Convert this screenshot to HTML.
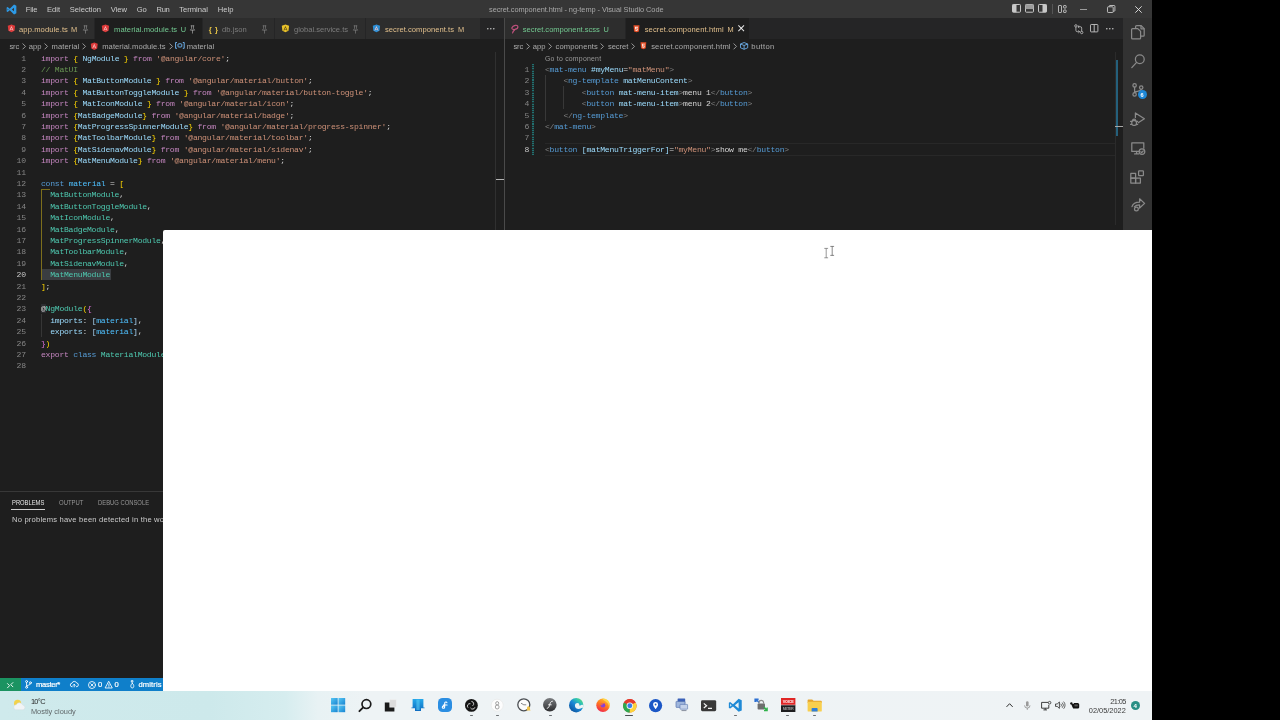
<!DOCTYPE html>
<html lang="en"><head><meta charset="utf-8"><title>secret.component.html - ng-temp - Visual Studio Code</title>
<style>
html,body{margin:0;padding:0;background:#000;}
#root{will-change:transform;position:relative;width:1280px;height:720px;overflow:hidden;background:#000;font-family:'Liberation Sans', sans-serif;}
.cl{position:absolute;white-space:pre;letter-spacing:-0.2558px;font-family:'Liberation Mono', monospace;font-size:8.1px;line-height:11.4px;height:11.4px;color:#d4d4d4;}
.ln{position:absolute;white-space:pre;letter-spacing:-0.2558px;font-family:'Liberation Mono', monospace;font-size:8.1px;line-height:11.4px;height:11.4px;color:#858585;text-align:right;}
.k{color:#c586c0}.b{color:#569cd6}.v{color:#9cdcfe}.s{color:#ce9178}.c{color:#6a9955}.t{color:#4ec9b0}
.y{color:#ffd700}.p{color:#da70d6}.u{color:#179fff}.g{color:#808080}.n{color:#4fc1ff}.w{color:#a9d4f2}
svg{position:absolute;overflow:visible}
</style></head><body><div id="root">
<div style="position:absolute;left:0px;top:0px;width:1152px;height:720px;background:#1e1e1e;"></div><div style="position:absolute;left:0px;top:0px;width:1152px;height:18px;background:#363636;"></div><div style="position:absolute;left:0px;top:18px;width:1123px;height:20.8px;background:#252526;"></div><div style="position:absolute;left:1123px;top:18px;width:29px;height:673.2px;background:#323232;"></div><div style="position:absolute;left:0px;top:18px;width:94.4px;height:20.8px;background:#2d2d2d;"></div><div style="position:absolute;left:94.4px;top:18px;width:108.3px;height:20.8px;background:#1e1e1e;"></div><div style="position:absolute;left:202.7px;top:18px;width:71.1px;height:20.8px;background:#2d2d2d;"></div><div style="position:absolute;left:273.8px;top:18px;width:91.2px;height:20.8px;background:#2d2d2d;"></div><div style="position:absolute;left:365px;top:18px;width:115.5px;height:20.8px;background:#2d2d2d;"></div><div style="position:absolute;left:94.10000000000001px;top:18px;width:0.6px;height:20.8px;background:#252526;"></div><div style="position:absolute;left:202.39999999999998px;top:18px;width:0.6px;height:20.8px;background:#252526;"></div><div style="position:absolute;left:273.5px;top:18px;width:0.6px;height:20.8px;background:#252526;"></div><div style="position:absolute;left:364.7px;top:18px;width:0.6px;height:20.8px;background:#252526;"></div><div style="position:absolute;left:480.2px;top:18px;width:0.6px;height:20.8px;background:#252526;"></div><div style="position:absolute;left:504.5px;top:18px;width:120.7px;height:20.8px;background:#2d2d2d;"></div><div style="position:absolute;left:625.2px;top:18px;width:123.8px;height:20.8px;background:#1e1e1e;"></div><div style="position:absolute;left:624.9px;top:18px;width:0.6px;height:20.8px;background:#252526;"></div><div style="position:absolute;left:504.1px;top:18px;width:0.7px;height:212px;background:#4a4a4a;"></div><div style="position:absolute;left:41px;top:269.3px;width:69.675px;height:10.4px;background:#3a3d41;"></div><div style="position:absolute;left:41px;top:304.2px;width:4.605px;height:9.0px;background:#2c2d30;"></div><div style="position:absolute;left:40.7px;top:189.0px;width:0.7px;height:91.2px;background:#7d6e1c;"></div><div style="position:absolute;left:40.7px;top:189.0px;width:9.21px;height:0.7px;background:#7d6e1c;"></div><div style="position:absolute;left:40.7px;top:314.4px;width:0.6px;height:22.8px;background:#363636;"></div><div class="ln" style="left:0;width:25.8px;top:52.60px;color:#858585">1</div><div class="cl" style="left:41px;top:52.60px"><span class="k">import</span> <span class="y">{</span> <span class="v">NgModule</span> <span class="y">}</span> <span class="k">from</span> <span class="s">&#x27;@angular/core&#x27;</span>;</div><div class="ln" style="left:0;width:25.8px;top:64.00px;color:#858585">2</div><div class="cl" style="left:41px;top:64.00px"><span class="c">// MatUI</span></div><div class="ln" style="left:0;width:25.8px;top:75.40px;color:#858585">3</div><div class="cl" style="left:41px;top:75.40px"><span class="k">import</span> <span class="y">{</span> <span class="v">MatButtonModule</span> <span class="y">}</span> <span class="k">from</span> <span class="s">&#x27;@angular/material/button&#x27;</span>;</div><div class="ln" style="left:0;width:25.8px;top:86.80px;color:#858585">4</div><div class="cl" style="left:41px;top:86.80px"><span class="k">import</span> <span class="y">{</span> <span class="v">MatButtonToggleModule</span> <span class="y">}</span> <span class="k">from</span> <span class="s">&#x27;@angular/material/button-toggle&#x27;</span>;</div><div class="ln" style="left:0;width:25.8px;top:98.20px;color:#858585">5</div><div class="cl" style="left:41px;top:98.20px"><span class="k">import</span> <span class="y">{</span> <span class="v">MatIconModule</span> <span class="y">}</span> <span class="k">from</span> <span class="s">&#x27;@angular/material/icon&#x27;</span>;</div><div class="ln" style="left:0;width:25.8px;top:109.60px;color:#858585">6</div><div class="cl" style="left:41px;top:109.60px"><span class="k">import</span> <span class="y">{</span><span class="v">MatBadgeModule</span><span class="y">}</span> <span class="k">from</span> <span class="s">&#x27;@angular/material/badge&#x27;</span>;</div><div class="ln" style="left:0;width:25.8px;top:121.00px;color:#858585">7</div><div class="cl" style="left:41px;top:121.00px"><span class="k">import</span> <span class="y">{</span><span class="v">MatProgressSpinnerModule</span><span class="y">}</span> <span class="k">from</span> <span class="s">&#x27;@angular/material/progress-spinner&#x27;</span>;</div><div class="ln" style="left:0;width:25.8px;top:132.40px;color:#858585">8</div><div class="cl" style="left:41px;top:132.40px"><span class="k">import</span> <span class="y">{</span><span class="v">MatToolbarModule</span><span class="y">}</span> <span class="k">from</span> <span class="s">&#x27;@angular/material/toolbar&#x27;</span>;</div><div class="ln" style="left:0;width:25.8px;top:143.80px;color:#858585">9</div><div class="cl" style="left:41px;top:143.80px"><span class="k">import</span> <span class="y">{</span><span class="v">MatSidenavModule</span><span class="y">}</span> <span class="k">from</span> <span class="s">&#x27;@angular/material/sidenav&#x27;</span>;</div><div class="ln" style="left:0;width:25.8px;top:155.20px;color:#858585">10</div><div class="cl" style="left:41px;top:155.20px"><span class="k">import</span> <span class="y">{</span><span class="v">MatMenuModule</span><span class="y">}</span> <span class="k">from</span> <span class="s">&#x27;@angular/material/menu&#x27;</span>;</div><div class="ln" style="left:0;width:25.8px;top:166.60px;color:#858585">11</div><div class="ln" style="left:0;width:25.8px;top:178.00px;color:#858585">12</div><div class="cl" style="left:41px;top:178.00px"><span class="b">const</span> <span class="n">material</span> = <span class="y">[</span></div><div class="ln" style="left:0;width:25.8px;top:189.40px;color:#858585">13</div><div class="cl" style="left:41px;top:189.40px">  <span class="t">MatButtonModule</span>,</div><div class="ln" style="left:0;width:25.8px;top:200.80px;color:#858585">14</div><div class="cl" style="left:41px;top:200.80px">  <span class="t">MatButtonToggleModule</span>,</div><div class="ln" style="left:0;width:25.8px;top:212.20px;color:#858585">15</div><div class="cl" style="left:41px;top:212.20px">  <span class="t">MatIconModule</span>,</div><div class="ln" style="left:0;width:25.8px;top:223.60px;color:#858585">16</div><div class="cl" style="left:41px;top:223.60px">  <span class="t">MatBadgeModule</span>,</div><div class="ln" style="left:0;width:25.8px;top:235.00px;color:#858585">17</div><div class="cl" style="left:41px;top:235.00px">  <span class="t">MatProgressSpinnerModule</span>,</div><div class="ln" style="left:0;width:25.8px;top:246.40px;color:#858585">18</div><div class="cl" style="left:41px;top:246.40px">  <span class="t">MatToolbarModule</span>,</div><div class="ln" style="left:0;width:25.8px;top:257.80px;color:#858585">19</div><div class="cl" style="left:41px;top:257.80px">  <span class="t">MatSidenavModule</span>,</div><div class="ln" style="left:0;width:25.8px;top:269.20px;color:#c6c6c6">20</div><div class="cl" style="left:41px;top:269.20px">  <span class="t">MatMenuModule</span></div><div class="ln" style="left:0;width:25.8px;top:280.60px;color:#858585">21</div><div class="cl" style="left:41px;top:280.60px"><span class="y">]</span>;</div><div class="ln" style="left:0;width:25.8px;top:292.00px;color:#858585">22</div><div class="ln" style="left:0;width:25.8px;top:303.40px;color:#858585">23</div><div class="cl" style="left:41px;top:303.40px">@<span class="t">NgModule</span><span class="y">(</span><span class="p">{</span></div><div class="ln" style="left:0;width:25.8px;top:314.80px;color:#858585">24</div><div class="cl" style="left:41px;top:314.80px">  <span class="v">imports</span>: <span class="w">[</span><span class="n">material</span><span class="w">]</span>,</div><div class="ln" style="left:0;width:25.8px;top:326.20px;color:#858585">25</div><div class="cl" style="left:41px;top:326.20px">  <span class="v">exports</span>: <span class="w">[</span><span class="n">material</span><span class="w">]</span>,</div><div class="ln" style="left:0;width:25.8px;top:337.60px;color:#858585">26</div><div class="cl" style="left:41px;top:337.60px"><span class="p">}</span><span class="y">)</span></div><div class="ln" style="left:0;width:25.8px;top:349.00px;color:#858585">27</div><div class="cl" style="left:41px;top:349.00px"><span class="k">export</span> <span class="b">class</span> <span class="t">MaterialModule</span> <span class="y">{}</span></div><div class="ln" style="left:0;width:25.8px;top:360.40px;color:#858585">28</div><div style="position:absolute;left:545px;top:143.4px;width:570px;height:0.7px;background:#282828;"></div><div style="position:absolute;left:545px;top:154.60000000000002px;width:570px;height:0.7px;background:#282828;"></div><div style="position:absolute;left:544.7px;top:75.0px;width:0.6px;height:45.6px;background:#383838;"></div><div style="position:absolute;left:563.12px;top:86.4px;width:0.6px;height:22.8px;background:#383838;"></div><div style="position:absolute;left:532.4px;top:63.6px;width:1.8px;height:91.2px;background:repeating-linear-gradient(180deg,#217070 0 1.1px,#1f3434 1.1px 2.2px)"></div><div class="ln" style="left:505px;width:24px;top:64.00px;color:#858585">1</div><div class="cl" style="left:545px;top:64.00px"><span class="g">&lt;</span><span class="b">mat-menu</span> <span class="v">#myMenu</span>=<span class="s">&quot;matMenu&quot;</span><span class="g">&gt;</span></div><div class="ln" style="left:505px;width:24px;top:75.40px;color:#858585">2</div><div class="cl" style="left:545px;top:75.40px">    <span class="g">&lt;</span><span class="b">ng-template</span> <span class="v">matMenuContent</span><span class="g">&gt;</span></div><div class="ln" style="left:505px;width:24px;top:86.80px;color:#858585">3</div><div class="cl" style="left:545px;top:86.80px">        <span class="g">&lt;</span><span class="b">button</span> <span class="v">mat-menu-item</span><span class="g">&gt;</span>menu 1<span class="g">&lt;/</span><span class="b">button</span><span class="g">&gt;</span></div><div class="ln" style="left:505px;width:24px;top:98.20px;color:#858585">4</div><div class="cl" style="left:545px;top:98.20px">        <span class="g">&lt;</span><span class="b">button</span> <span class="v">mat-menu-item</span><span class="g">&gt;</span>menu 2<span class="g">&lt;/</span><span class="b">button</span><span class="g">&gt;</span></div><div class="ln" style="left:505px;width:24px;top:109.60px;color:#858585">5</div><div class="cl" style="left:545px;top:109.60px">    <span class="g">&lt;/</span><span class="b">ng-template</span><span class="g">&gt;</span></div><div class="ln" style="left:505px;width:24px;top:121.00px;color:#858585">6</div><div class="cl" style="left:545px;top:121.00px"><span class="g">&lt;/</span><span class="b">mat-menu</span><span class="g">&gt;</span></div><div class="ln" style="left:505px;width:24px;top:132.40px;color:#858585">7</div><div class="ln" style="left:505px;width:24px;top:143.80px;color:#c6c6c6">8</div><div class="cl" style="left:545px;top:143.80px"><span class="g">&lt;</span><span class="b">button</span> <span class="v">[matMenuTriggerFor]</span>=<span class="s">&quot;myMenu&quot;</span><span class="g">&gt;</span>show me<span class="g">&lt;/</span><span class="b">button</span><span class="g">&gt;</span></div><div style="position:absolute;left:1115.2px;top:59.5px;width:3.2px;height:76px;background:#24607c;"></div><div style="position:absolute;left:1114.9px;top:52.2px;width:0.5px;height:173px;background:#2b2b2b;"></div><div style="position:absolute;left:495.3px;top:52.2px;width:0.5px;height:177.8px;background:#303030;"></div><div style="position:absolute;left:1115px;top:126.4px;width:8px;height:0.9px;background:#a8a8a8;"></div><div style="position:absolute;left:495.8px;top:178.9px;width:8.3px;height:0.9px;background:#b4b4b4;"></div><div style="position:absolute;left:0px;top:490.7px;width:1123px;height:0.7px;background:#383838;"></div><div style="position:absolute;left:0px;top:678px;width:1152px;height:13.2px;background:#0f7fca;"></div><div style="position:absolute;left:0px;top:678px;width:20.5px;height:13.2px;background:#1b9361;"></div><div style="position:absolute;left:0;top:691.2px;width:1152px;height:28.8px;background:linear-gradient(90deg,#cfeaec 0,#cde9eb 210px,#d6edef 285px,#e8f2f4 318px,#eef3f5 370px,#eff3f5 100%)"></div><div style="position:absolute;left:162.5px;top:230px;width:989.5px;height:461.2px;background:#ffffff;border-top-left-radius:2px;z-index:5;"></div><svg style="left:5.5px;top:3.6px" width="11" height="11" viewBox="0 0 24 24" ><path d="M17.5 1.2 22.6 3.6v16.8l-5.1 2.4L8.2 13.9 3.6 17.4 1.4 16.3V7.7l2.2-1.1 4.6 3.5z" fill="#2d9ae6"/><path d="M17.5 8.2 12.6 12l4.9 3.8z" fill="#363636"/><path d="M3.6 10.2 5.5 12 3.6 13.8z" fill="#363636"/></svg><span style="position:absolute;top:3.90px;line-height:12px;white-space:pre;color:#cccccc;font-size:7.6px;font-family:'Liberation Sans', sans-serif;left:25.70px;letter-spacing:-0.187px;">File</span><span style="position:absolute;top:3.90px;line-height:12px;white-space:pre;color:#cccccc;font-size:7.6px;font-family:'Liberation Sans', sans-serif;left:47.00px;letter-spacing:0.027px;">Edit</span><span style="position:absolute;top:3.90px;line-height:12px;white-space:pre;color:#cccccc;font-size:7.6px;font-family:'Liberation Sans', sans-serif;left:69.70px;letter-spacing:0.006px;">Selection</span><span style="position:absolute;top:3.90px;line-height:12px;white-space:pre;color:#cccccc;font-size:7.6px;font-family:'Liberation Sans', sans-serif;left:110.70px;letter-spacing:-0.007px;">View</span><span style="position:absolute;top:3.90px;line-height:12px;white-space:pre;color:#cccccc;font-size:7.6px;font-family:'Liberation Sans', sans-serif;left:136.70px;letter-spacing:-0.020px;">Go</span><span style="position:absolute;top:3.90px;line-height:12px;white-space:pre;color:#cccccc;font-size:7.6px;font-family:'Liberation Sans', sans-serif;left:156.40px;letter-spacing:-0.246px;">Run</span><span style="position:absolute;top:3.90px;line-height:12px;white-space:pre;color:#cccccc;font-size:7.6px;font-family:'Liberation Sans', sans-serif;left:179.20px;letter-spacing:0.012px;">Terminal</span><span style="position:absolute;top:3.90px;line-height:12px;white-space:pre;color:#cccccc;font-size:7.6px;font-family:'Liberation Sans', sans-serif;left:217.70px;letter-spacing:0.094px;">Help</span><span style="position:absolute;top:3.90px;line-height:12px;white-space:pre;color:#a8a8a8;font-size:7.4px;font-family:'Liberation Sans', sans-serif;left:489.00px;letter-spacing:-0.062px;">secret.component.html - ng-temp - Visual Studio Code</span><svg style="left:1012px;top:4.4px" width="9" height="8.7" viewBox="0 0 9 8.7" ><rect x=".5" y=".5" width="8" height="7.7" rx=".8" fill="none" stroke="#c8c8c8" stroke-width="1"/><rect x=".5" y=".5" width="4" height="7.7" fill="#c8c8c8"/></svg><svg style="left:1025.2px;top:4.4px" width="9" height="8.7" viewBox="0 0 9 8.7" ><rect x=".5" y=".5" width="8" height="7.7" rx=".8" fill="none" stroke="#c8c8c8" stroke-width="1"/><rect x=".5" y=".5" width="8" height="4.6" fill="#9a9a9a"/></svg><svg style="left:1038.4px;top:4.4px" width="9" height="8.7" viewBox="0 0 9 8.7" ><rect x=".5" y=".5" width="8" height="7.7" rx=".8" fill="none" stroke="#c8c8c8" stroke-width="1"/><rect x="4.5" y=".5" width="4" height="7.7" fill="#c8c8c8"/></svg><div style="position:absolute;left:1052px;top:4px;width:0.6px;height:9.6px;background:#555;"></div><svg style="left:1057.6px;top:4.8px" width="8.6" height="8" viewBox="0 0 8.6 8" ><rect x=".5" y=".5" width="3" height="7" rx=".6" fill="none" stroke="#c8c8c8" stroke-width=".9"/><rect x="5.6" y=".5" width="2.5" height="2.5" rx=".5" fill="none" stroke="#c8c8c8" stroke-width=".9"/><rect x="5.6" y="5" width="2.5" height="2.5" rx=".5" fill="none" stroke="#c8c8c8" stroke-width=".9"/></svg><div style="position:absolute;left:1080.3px;top:8.9px;width:6.6px;height:0.7px;background:#9c9c9c;"></div><svg style="left:1106.6px;top:5.2px" width="8.4" height="8" viewBox="0 0 8.4 8" ><rect x=".5" y="1.8" width="5.7" height="5.7" rx=".7" fill="none" stroke="#c8c8c8" stroke-width=".9"/><path d="M2.2 1.8V1.2a.7.7 0 0 1 .7-.7h4.3a.7.7 0 0 1 .7.7v4.3a.7.7 0 0 1-.7.7H6.2" fill="none" stroke="#c8c8c8" stroke-width=".9"/></svg><svg style="left:1135px;top:5.5px" width="7" height="7" viewBox="0 0 7 7" ><path d="M.3.3 6.7 6.7M6.7.3.3 6.7" stroke="#dcdcdc" stroke-width=".95" fill="none"/></svg><svg style="left:6.9px;top:24.299999999999997px" width="8.9" height="8.9" viewBox="0 0 24 24" ><path d="M12 1.5 2.2 5l1.5 13L12 22.5 20.3 18l1.5-13z" fill="#dd3a3a"/><path d="M12 5.2 6.4 17.6h2.1l1.1-2.8h4.8l1.1 2.8h2.1zm0 4.2 1.6 4h-3.2z" fill="#f8c4c4"/></svg><span style="position:absolute;top:23.80px;line-height:12px;white-space:pre;color:#e2c08d;font-size:7.6px;font-family:'Liberation Sans', sans-serif;left:19.00px;letter-spacing:0.100px;">app.module.ts</span><span style="position:absolute;top:23.80px;line-height:12px;white-space:pre;color:#e2c08d;font-size:7.4px;font-family:'Liberation Sans', sans-serif;left:71.00px;letter-spacing:0.428px;">M</span><svg style="left:80.7px;top:24.8px" width="9" height="9" viewBox="0 0 16 16" ><path d="M5.5 1.5h5M6.3 1.5v5L4.2 9.2h7.6L9.7 6.5v-5M8 9.2V14.5" fill="none" stroke="#858585" stroke-width="1.3" stroke-linejoin="round" stroke-linecap="round"/></svg><svg style="left:101.3px;top:24.299999999999997px" width="8.9" height="8.9" viewBox="0 0 24 24" ><path d="M12 1.5 2.2 5l1.5 13L12 22.5 20.3 18l1.5-13z" fill="#dd3a3a"/><path d="M12 5.2 6.4 17.6h2.1l1.1-2.8h4.8l1.1 2.8h2.1zm0 4.2 1.6 4h-3.2z" fill="#f8c4c4"/></svg><span style="position:absolute;top:23.80px;line-height:12px;white-space:pre;color:#73c991;font-size:7.6px;font-family:'Liberation Sans', sans-serif;left:114.00px;letter-spacing:0.064px;">material.module.ts</span><span style="position:absolute;top:23.80px;line-height:12px;white-space:pre;color:#73c991;font-size:7.4px;font-family:'Liberation Sans', sans-serif;left:180.70px;letter-spacing:-0.344px;">U</span><svg style="left:187.7px;top:24.8px" width="9" height="9" viewBox="0 0 16 16" ><path d="M5.5 1.5h5M6.3 1.5v5L4.2 9.2h7.6L9.7 6.5v-5M8 9.2V14.5" fill="none" stroke="#a0a0a0" stroke-width="1.3" stroke-linejoin="round" stroke-linecap="round"/></svg><span style="position:absolute;top:23.50px;line-height:12px;white-space:pre;color:#e8c547;font-size:7.8px;font-family:'Liberation Sans', sans-serif;font-weight:700;left:208.80px;letter-spacing:0.450px;">{ }</span><span style="position:absolute;top:23.80px;line-height:12px;white-space:pre;color:#7d7d7d;font-size:7.6px;font-family:'Liberation Sans', sans-serif;left:221.90px;letter-spacing:0.071px;">db.json</span><svg style="left:259.7px;top:24.8px" width="9" height="9" viewBox="0 0 16 16" ><path d="M5.5 1.5h5M6.3 1.5v5L4.2 9.2h7.6L9.7 6.5v-5M8 9.2V14.5" fill="none" stroke="#7a7a7a" stroke-width="1.3" stroke-linejoin="round" stroke-linecap="round"/></svg><svg style="left:281.3px;top:24.299999999999997px" width="8.9" height="8.9" viewBox="0 0 24 24" ><path d="M12 1.5 2.2 5l1.5 13L12 22.5 20.3 18l1.5-13z" fill="#e8c12a"/><path d="M12 5.2 6.4 17.6h2.1l1.1-2.8h4.8l1.1 2.8h2.1zm0 4.2 1.6 4h-3.2z" fill="#5a4a10"/></svg><span style="position:absolute;top:23.80px;line-height:12px;white-space:pre;color:#7d7d7d;font-size:7.6px;font-family:'Liberation Sans', sans-serif;left:294.00px;letter-spacing:-0.027px;">global.service.ts</span><svg style="left:350.9px;top:24.8px" width="9" height="9" viewBox="0 0 16 16" ><path d="M5.5 1.5h5M6.3 1.5v5L4.2 9.2h7.6L9.7 6.5v-5M8 9.2V14.5" fill="none" stroke="#7a7a7a" stroke-width="1.3" stroke-linejoin="round" stroke-linecap="round"/></svg><svg style="left:371.9px;top:24.299999999999997px" width="8.9" height="8.9" viewBox="0 0 24 24" ><path d="M12 1.5 2.2 5l1.5 13L12 22.5 20.3 18l1.5-13z" fill="#2d8fd6"/><path d="M12 5.2 6.4 17.6h2.1l1.1-2.8h4.8l1.1 2.8h2.1zm0 4.2 1.6 4h-3.2z" fill="#f8c4c4"/></svg><span style="position:absolute;top:23.80px;line-height:12px;white-space:pre;color:#e2c08d;font-size:7.6px;font-family:'Liberation Sans', sans-serif;left:385.00px;letter-spacing:0.032px;">secret.component.ts</span><span style="position:absolute;top:23.80px;line-height:12px;white-space:pre;color:#e2c08d;font-size:7.4px;font-family:'Liberation Sans', sans-serif;left:458.00px;letter-spacing:0.428px;">M</span><svg style="left:486.6px;top:27.9px" width="7.6" height="1.6" viewBox="0 0 7.6 1.6" ><circle cx="0.8" cy="0.8" r="0.8" fill="#c5c5c5"/><circle cx="3.8" cy="0.8" r="0.8" fill="#c5c5c5"/><circle cx="6.8" cy="0.8" r="0.8" fill="#c5c5c5"/></svg><svg style="left:510.8px;top:24px" width="8" height="9.4" viewBox="0 0 8 9.4" ><path d="M6.900 2.700C6.700.5 2 .9.900 3.800c-.5 1.600 2.100 1.900 3.300 1.500 1.700-.5 2.800-1.700 2.700-2.600M4.200 5.200C2.900 6.200 1.800 7.600 1.600 9" fill="none" stroke="#c4527f" stroke-width="1.150" stroke-linecap="round"/></svg><span style="position:absolute;top:23.80px;line-height:12px;white-space:pre;color:#73c991;font-size:7.6px;font-family:'Liberation Sans', sans-serif;left:522.80px;letter-spacing:-0.032px;">secret.component.scss</span><span style="position:absolute;top:23.80px;line-height:12px;white-space:pre;color:#73c991;font-size:7.4px;font-family:'Liberation Sans', sans-serif;left:603.60px;letter-spacing:-0.344px;">U</span><svg style="left:632.6px;top:24.5px" width="7" height="7.700000000000001" viewBox="0 0 20 22" ><path d="M1.5 1h17l-1.6 17.5L10 21l-6.9-2.5z" fill="#e44d26"/><path d="M5.5 5h9l-.3 2.6H8.3l.2 2.4h5.4l-.6 6L10 17l-3.3-1-.2-2.6h2.4l.1 1 1 .3 1-.3.2-2H6.2z" fill="#fff" opacity=".9"/></svg><span style="position:absolute;top:23.80px;line-height:12px;white-space:pre;color:#e2c08d;font-size:7.6px;font-family:'Liberation Sans', sans-serif;left:644.70px;letter-spacing:0.103px;">secret.component.html</span><span style="position:absolute;top:23.80px;line-height:12px;white-space:pre;color:#e2c08d;font-size:7.4px;font-family:'Liberation Sans', sans-serif;left:727.40px;letter-spacing:0.428px;">M</span><svg style="left:737.8px;top:25.4px" width="6.4" height="6.4" viewBox="0 0 7 7" ><path d="M.4.4 6.6 6.6M6.6.4.4 6.6" stroke="#e8e8e8" stroke-width="1.1" fill="none"/></svg><svg style="left:1073.6px;top:23.8px" width="9.6" height="10.4" viewBox="0 0 9.6 10.4" ><circle cx="1.9" cy="1.9" r="1.2" fill="none" stroke="#c5c5c5" stroke-width=".8"/><circle cx="7.7" cy="8.5" r="1.2" fill="none" stroke="#c5c5c5" stroke-width=".8"/><path d="M1.9 3.1v3.2a1.4 1.4 0 0 0 1.4 1.4h2.2M4.4 6.5l1.3 1.2-1.3 1.2M7.7 7.3V4.1a1.4 1.4 0 0 0-1.4-1.4H4.1M5.2 3.9 3.9 2.7l1.3-1.2" fill="none" stroke="#c5c5c5" stroke-width=".8"/></svg><svg style="left:1090px;top:24.4px" width="8.4" height="8.4" viewBox="0 0 8.4 8.4" ><rect x=".5" y=".5" width="7.4" height="7.4" rx=".7" fill="none" stroke="#c5c5c5" stroke-width=".9"/><path d="M4.2.5v7.4" stroke="#c5c5c5" stroke-width=".9"/></svg><svg style="left:1105.6px;top:27.9px" width="7.6" height="1.6" viewBox="0 0 7.6 1.6" ><circle cx="0.8" cy="0.8" r="0.8" fill="#c5c5c5"/><circle cx="3.8" cy="0.8" r="0.8" fill="#c5c5c5"/><circle cx="6.8" cy="0.8" r="0.8" fill="#c5c5c5"/></svg><span style="position:absolute;top:40.50px;line-height:12px;white-space:pre;color:#ababab;font-size:7.6px;font-family:'Liberation Sans', sans-serif;left:9.40px;letter-spacing:-0.108px;">src</span><svg style="left:22.0px;top:42.699999999999996px" width="4.2" height="6.8" viewBox="0 0 4.2 6.8" ><path d="M.6.5 3.500 3.400 .6 6.300" fill="none" stroke="#a0a0a0" stroke-width=".95"/></svg><span style="position:absolute;top:40.50px;line-height:12px;white-space:pre;color:#ababab;font-size:7.6px;font-family:'Liberation Sans', sans-serif;left:28.70px;letter-spacing:0.109px;">app</span><svg style="left:44.4px;top:42.699999999999996px" width="4.2" height="6.8" viewBox="0 0 4.2 6.8" ><path d="M.6.5 3.500 3.400 .6 6.300" fill="none" stroke="#a0a0a0" stroke-width=".95"/></svg><span style="position:absolute;top:40.50px;line-height:12px;white-space:pre;color:#ababab;font-size:7.6px;font-family:'Liberation Sans', sans-serif;left:51.50px;letter-spacing:0.123px;">material</span><svg style="left:82.0px;top:42.699999999999996px" width="4.2" height="6.8" viewBox="0 0 4.2 6.8" ><path d="M.6.5 3.500 3.400 .6 6.300" fill="none" stroke="#a0a0a0" stroke-width=".95"/></svg><svg style="left:89.5px;top:41.5px" width="8.5" height="8.5" viewBox="0 0 24 24" ><path d="M12 1.5 2.2 5l1.5 13L12 22.5 20.3 18l1.5-13z" fill="#dd3a3a"/><path d="M12 5.2 6.4 17.6h2.1l1.1-2.8h4.8l1.1 2.8h2.1zm0 4.2 1.6 4h-3.2z" fill="#f8c4c4"/></svg><span style="position:absolute;top:40.50px;line-height:12px;white-space:pre;color:#ababab;font-size:7.6px;font-family:'Liberation Sans', sans-serif;left:102.20px;letter-spacing:0.075px;">material.module.ts</span><svg style="left:168.8px;top:42.699999999999996px" width="4.2" height="6.8" viewBox="0 0 4.2 6.8" ><path d="M.6.5 3.500 3.400 .6 6.300" fill="none" stroke="#a0a0a0" stroke-width=".95"/></svg><svg style="left:175.4px;top:42.3px" width="9.8" height="6.8" viewBox="0 0 9.8 6.8" ><path d="M2 .5H.6v5.8H2M7.8.5h1.4v5.8H7.8" fill="none" stroke="#75beff" stroke-width=".9"/><rect x="3" y="1.8" width="3.8" height="3.2" rx=".8" fill="none" stroke="#75beff" stroke-width=".9"/></svg><span style="position:absolute;top:40.50px;line-height:12px;white-space:pre;color:#ababab;font-size:7.6px;font-family:'Liberation Sans', sans-serif;left:186.70px;letter-spacing:0.073px;">material</span><span style="position:absolute;top:40.50px;line-height:12px;white-space:pre;color:#ababab;font-size:7.6px;font-family:'Liberation Sans', sans-serif;left:513.40px;letter-spacing:-0.108px;">src</span><svg style="left:526.0px;top:42.699999999999996px" width="4.2" height="6.8" viewBox="0 0 4.2 6.8" ><path d="M.6.5 3.500 3.400 .6 6.300" fill="none" stroke="#a0a0a0" stroke-width=".95"/></svg><span style="position:absolute;top:40.50px;line-height:12px;white-space:pre;color:#ababab;font-size:7.6px;font-family:'Liberation Sans', sans-serif;left:532.70px;letter-spacing:0.109px;">app</span><svg style="left:548.4px;top:42.699999999999996px" width="4.2" height="6.8" viewBox="0 0 4.2 6.8" ><path d="M.6.5 3.500 3.400 .6 6.300" fill="none" stroke="#a0a0a0" stroke-width=".95"/></svg><span style="position:absolute;top:40.50px;line-height:12px;white-space:pre;color:#ababab;font-size:7.6px;font-family:'Liberation Sans', sans-serif;left:555.60px;letter-spacing:0.092px;">components</span><svg style="left:600.4px;top:42.699999999999996px" width="4.2" height="6.8" viewBox="0 0 4.2 6.8" ><path d="M.6.5 3.500 3.400 .6 6.300" fill="none" stroke="#a0a0a0" stroke-width=".95"/></svg><span style="position:absolute;top:40.50px;line-height:12px;white-space:pre;color:#ababab;font-size:7.6px;font-family:'Liberation Sans', sans-serif;left:607.90px;letter-spacing:-0.048px;">secret</span><svg style="left:631.0px;top:42.699999999999996px" width="4.2" height="6.8" viewBox="0 0 4.2 6.8" ><path d="M.6.5 3.500 3.400 .6 6.300" fill="none" stroke="#a0a0a0" stroke-width=".95"/></svg><svg style="left:639.8px;top:41.8px" width="6.8" height="7.48" viewBox="0 0 20 22" ><path d="M1.5 1h17l-1.6 17.5L10 21l-6.9-2.5z" fill="#e44d26"/><path d="M5.5 5h9l-.3 2.6H8.3l.2 2.4h5.4l-.6 6L10 17l-3.3-1-.2-2.6h2.4l.1 1 1 .3 1-.3.2-2H6.2z" fill="#fff" opacity=".9"/></svg><span style="position:absolute;top:40.50px;line-height:12px;white-space:pre;color:#ababab;font-size:7.6px;font-family:'Liberation Sans', sans-serif;left:651.20px;letter-spacing:0.127px;">secret.component.html</span><svg style="left:733.0px;top:42.699999999999996px" width="4.2" height="6.8" viewBox="0 0 4.2 6.8" ><path d="M.6.5 3.500 3.400 .6 6.300" fill="none" stroke="#a0a0a0" stroke-width=".95"/></svg><svg style="left:740px;top:41.8px" width="8.2" height="7.8" viewBox="0 0 8.2 7.8" ><path d="M4.1.5 7.7 2v3.8L4.1 7.3.5 5.8V2zM.5 2l3.6 1.5L7.7 2M4.1 3.5v3.8" fill="none" stroke="#75beff" stroke-width=".8" stroke-linejoin="round"/></svg><span style="position:absolute;top:40.50px;line-height:12px;white-space:pre;color:#ababab;font-size:7.6px;font-family:'Liberation Sans', sans-serif;left:751.30px;letter-spacing:0.379px;">button</span><span style="position:absolute;top:53.10px;line-height:12px;white-space:pre;color:#999999;font-size:6.9px;font-family:'Liberation Sans', sans-serif;left:545.00px;letter-spacing:0.228px;">Go to component</span><span style="position:absolute;top:497.40px;line-height:12px;white-space:pre;color:#e7e7e7;font-size:6.5px;font-family:'Liberation Sans', sans-serif;left:12.00px;display:inline-block;transform:scaleX(0.8941);transform-origin:left center;">PROBLEMS</span><div style="position:absolute;left:10.8px;top:508.9px;width:34.7px;height:0.7px;background:#cfcfcf;"></div><span style="position:absolute;top:497.40px;line-height:12px;white-space:pre;color:#969696;font-size:6.5px;font-family:'Liberation Sans', sans-serif;left:58.50px;display:inline-block;transform:scaleX(0.9164);transform-origin:left center;">OUTPUT</span><span style="position:absolute;top:497.40px;line-height:12px;white-space:pre;color:#969696;font-size:6.5px;font-family:'Liberation Sans', sans-serif;left:97.60px;display:inline-block;transform:scaleX(0.9009);transform-origin:left center;">DEBUG CONSOLE</span><span style="position:absolute;top:514.00px;line-height:12px;white-space:pre;color:#cccccc;font-size:7.6px;font-family:'Liberation Sans', sans-serif;left:12.00px;letter-spacing:0.196px;">No problems have been detected in the workspace.</span><svg style="left:1130.5px;top:25px" width="14" height="14.6" viewBox="0 0 14 14.6" ><g fill="none" stroke="#8a8a8a" stroke-width="1.25" stroke-linejoin="round" stroke-linecap="round"><path d="M4.6 3.4V1.6a1 1 0 0 1 1-1h4.6l3 3v6.6a1 1 0 0 1-1 1H9.6"/><path d="M10 .8v3h3"/><path d="M1.6 3.6h5.2l2.8 2.8v6.6a1 1 0 0 1-1 1h-7a1 1 0 0 1-1-1V4.6a1 1 0 0 1 1-1z"/></g></svg><svg style="left:1131px;top:54px" width="14" height="14.4" viewBox="0 0 14 14.4" ><g fill="none" stroke="#8a8a8a" stroke-width="1.25" stroke-linejoin="round" stroke-linecap="round"><circle cx="8.8" cy="5.2" r="4.4"/><path d="M5.6 8.4.8 13.6"/></g></svg><svg style="left:1131.5px;top:83px" width="12" height="14" viewBox="0 0 12 14" ><g fill="none" stroke="#8a8a8a" stroke-width="1.25" stroke-linejoin="round" stroke-linecap="round"><circle cx="2.6" cy="2.4" r="1.7"/><circle cx="2.6" cy="11.4" r="1.7"/><circle cx="9.2" cy="4.6" r="1.7"/><path d="M2.6 4.1v5.6M9.2 6.3c0 2.6-6.6 1.6-6.6 3.4"/></g></svg><div style="position:absolute;left:1137.6px;top:89.7px;width:9.6px;height:9.6px;border-radius:5px;background:#1e88d8"></div><span style="position:absolute;top:89.30px;line-height:12px;white-space:pre;color:#ffffff;font-size:5.6px;font-family:'Liberation Sans', sans-serif;font-weight:700;left:1140.60px;letter-spacing:0.475px;">6</span><svg style="left:1130px;top:111.6px" width="15" height="14.4" viewBox="0 0 15 14.4" ><g fill="none" stroke="#8a8a8a" stroke-width="1.25" stroke-linejoin="round" stroke-linecap="round"><path d="M5.4 5.6V1l9 5.8-6.2 4"/><rect x="1.8" y="8.6" width="4.6" height="4.8" rx="1.6"/><path d="M.6 9.4h1.2M6.4 9.4h1.2M.6 12.4h1.2M6.4 12.4h1.2M2.6 8.6a1.5 1.5 0 0 1 3 0"/></g></svg><svg style="left:1130.5px;top:141.6px" width="14.4" height="13" viewBox="0 0 14.4 13" ><g fill="none" stroke="#8a8a8a" stroke-width="1.25" stroke-linejoin="round" stroke-linecap="round"><path d="M8.2 9.4H.8V.8h12v5.4"/><path d="M3.6 12h4.2M5.6 9.4V12"/><circle cx="11" cy="9.6" r="2.8"/><path d="M9.8 9.8l.9.9 1.6-1.8"/></g></svg><svg style="left:1130px;top:169.6px" width="15" height="14" viewBox="0 0 15 14" ><g fill="none" stroke="#8a8a8a" stroke-width="1.25" stroke-linejoin="round" stroke-linecap="round"><rect x=".8" y="3.4" width="4.8" height="4.8"/><rect x=".8" y="8.2" width="4.8" height="4.8"/><rect x="5.6" y="8.2" width="4.8" height="4.8"/><rect x="8.6" y=".8" width="4.8" height="4.8" rx=".6"/></g></svg><svg style="left:1131px;top:198.2px" width="14.4" height="13.6" viewBox="0 0 14.4 13.6" ><g fill="none" stroke="#8a8a8a" stroke-width="1.25" stroke-linejoin="round" stroke-linecap="round"><path d="M1 8.6C2 5.4 5 4.2 8.6 4.2V.8l5 4.6-5 4.6V6.8C6 6.8 4.4 7.4 3.4 8.8"/><circle cx="5.4" cy="11" r="1.9"/></g></svg><svg style="left:7.4px;top:681.6px" width="6.4" height="6.4" viewBox="0 0 6.4 6.4" ><g fill="none" stroke="#ffffff" stroke-width="0.9" stroke-linejoin="round" stroke-linecap="round"><path d="M.5 1.6 2.6 3.7.5 5.8M5.9.6 3.8 2.7l2.1 2.1"/></g></svg><svg style="left:25.4px;top:680.4px" width="7" height="8.8" viewBox="0 0 7 8.8" ><g fill="none" stroke="#ffffff" stroke-width="0.85" stroke-linejoin="round" stroke-linecap="round"><circle cx="1.6" cy="1.5" r="1"/><circle cx="1.6" cy="7.3" r="1"/><circle cx="5.4" cy="2.8" r="1"/><path d="M1.6 2.5v3.8M5.4 3.8c0 1.8-3.8 1-3.8 2.4"/></g></svg><span style="position:absolute;top:679.40px;line-height:12px;white-space:pre;color:#ffffff;font-size:7.6px;font-family:'Liberation Sans', sans-serif;left:36.00px;letter-spacing:-0.310px;-webkit-text-stroke:.2px #fff;">master*</span><svg style="left:69.8px;top:681.4px" width="8.4" height="6.4" viewBox="0 0 8.4 6.4" ><g fill="none" stroke="#ffffff" stroke-width="0.85" stroke-linejoin="round" stroke-linecap="round"><path d="M2.2 5.8a1.8 1.8 0 0 1-.2-3.6A2.4 2.4 0 0 1 6.6 2 1.9 1.9 0 0 1 6.4 5.8"/><path d="M4.2 5.9V3.4M3.2 4.3l1-1 1 1"/></g></svg><svg style="left:88px;top:680.7px" width="8" height="8" viewBox="0 0 8 8" ><g fill="none" stroke="#ffffff" stroke-width="0.85" stroke-linejoin="round" stroke-linecap="round"><circle cx="4" cy="4" r="3.5"/><path d="M2.7 2.7l2.6 2.6M5.3 2.7 2.7 5.3"/></g></svg><span style="position:absolute;top:679.40px;line-height:12px;white-space:pre;color:#ffffff;font-size:7.6px;font-family:'Liberation Sans', sans-serif;left:98.00px;letter-spacing:-0.234px;-webkit-text-stroke:.2px #fff;">0</span><svg style="left:105px;top:680.8px" width="7.8" height="7.6" viewBox="0 0 7.8 7.6" ><g fill="none" stroke="#ffffff" stroke-width="0.85" stroke-linejoin="round" stroke-linecap="round"><path d="M3.9.6 7.3 7H.5z"/><path d="M3.9 3v2M3.9 5.9v.2"/></g></svg><span style="position:absolute;top:679.40px;line-height:12px;white-space:pre;color:#ffffff;font-size:7.6px;font-family:'Liberation Sans', sans-serif;left:114.50px;letter-spacing:-0.234px;-webkit-text-stroke:.2px #fff;">0</span><svg style="left:129.8px;top:680.2px" width="4.6" height="8.6" viewBox="0 0 4.6 8.6" ><g fill="none" stroke="#ffffff" stroke-width="0.85" stroke-linejoin="round" stroke-linecap="round"><path d="M2.3 3.2C.2 4.6.3 8 2.3 8s2.1-3.4 0-4.8z"/><path d="M1.7.6h1.2v1.5H1.7z"/></g></svg><span style="position:absolute;top:679.40px;line-height:12px;white-space:pre;color:#ffffff;font-size:7.6px;font-family:'Liberation Sans', sans-serif;left:138.50px;letter-spacing:0.120px;-webkit-text-stroke:.2px #fff;">dmitris</span><svg style="left:12.8px;top:699.2px" width="13.2" height="12" viewBox="0 0 13.2 12" ><circle cx="4.6" cy="4.4" r="3.6" fill="#f2d24b"/><path d="M2.6 10.8a2.6 2.6 0 0 1 .6-5.1 3.6 3.6 0 0 1 6.6.4 2.4 2.4 0 0 1 .4 4.7z" fill="#f1f4f6"/><path d="M2.6 10.8a2.6 2.6 0 0 1 .6-5.1 3.6 3.6 0 0 1 6.6.4 2.4 2.4 0 0 1 .4 4.7z" fill="none" stroke="#d4dde0" stroke-width=".5"/></svg><span style="position:absolute;top:696.00px;line-height:12px;white-space:pre;color:#1f1f1f;font-size:7.4px;font-family:'Liberation Sans', sans-serif;left:30.90px;letter-spacing:-0.629px;">10°C</span><span style="position:absolute;top:705.80px;line-height:12px;white-space:pre;color:#5f6668;font-size:7.4px;font-family:'Liberation Sans', sans-serif;left:30.90px;letter-spacing:0.009px;">Mostly cloudy</span><svg width="0" height="0" style="position:absolute"><defs><linearGradient id="gw" x1="0" y1="0" x2="1" y2="1"><stop offset="0" stop-color="#58c8f4"/><stop offset="1" stop-color="#1784d2"/></linearGradient><linearGradient id="gwd" x1="0" y1="0" x2="0" y2="1"><stop offset="0" stop-color="#25a8ea"/><stop offset="1" stop-color="#0f6cc0"/></linearGradient><linearGradient id="ge" x1="1" y1="0" x2=".15" y2="1"><stop offset="0" stop-color="#6fe05a"/><stop offset=".3" stop-color="#2fc3b4"/><stop offset=".55" stop-color="#1a86d6"/><stop offset="1" stop-color="#0b4d96"/></linearGradient><linearGradient id="gf" x1=".8" y1="0" x2=".3" y2="1"><stop offset="0" stop-color="#ffc533"/><stop offset=".5" stop-color="#ff7a1f"/><stop offset="1" stop-color="#f0264e"/></linearGradient><linearGradient id="gfl" x1="0" y1="0" x2="0" y2="1"><stop offset="0" stop-color="#7a7d80"/><stop offset="1" stop-color="#2c2d2f"/></linearGradient></defs></svg><svg style="left:331.4px;top:698.4px" width="14.2" height="14.2" viewBox="0 0 14.2 14.2" ><rect x="0" y="0" width="6.7" height="6.7" fill="url(#gw)"/><rect x="7.5" y="0" width="6.7" height="6.7" fill="url(#gw)"/><rect x="0" y="7.5" width="6.7" height="6.7" fill="url(#gw)"/><rect x="7.5" y="7.5" width="6.7" height="6.7" fill="url(#gw)"/></svg><svg style="left:358.4px;top:698.4px" width="14" height="14" viewBox="0 0 14 14" ><circle cx="8.4" cy="6.1" r="4.4" fill="none" stroke="#1c1c1c" stroke-width="1.7"/><path d="M5.2 9.4 1.4 13.2" stroke="#1c1c1c" stroke-width="1.9" stroke-linecap="round"/></svg><svg style="left:383.9px;top:699.1px" width="13" height="13" viewBox="0 0 13 13" ><rect x="5.6" y="0.6" width="6.8" height="7.6" rx=".8" fill="#dcdcdc" stroke="#f4f4f4" stroke-width=".6"/><path d="M.8 3.6h4.6v5h5v4H.8z" fill="#1b1b1b"/></svg><svg style="left:411.1px;top:698.3px" width="14" height="14" viewBox="0 0 14 14" ><path d="M1.6 1h10.8v8.4h1.2v.9H10v2.6H4v-2.6H.4v-.9h1.2z" fill="url(#gwd)"/><rect x="5.4" y="1.6" width="3.2" height="10.4" fill="#5fd0f6" opacity=".55"/></svg><svg style="left:437.5px;top:698.3px" width="14" height="14" viewBox="0 0 14 14" ><rect x="0" y="0" width="14" height="14" rx="4.6" fill="#2b8ee2"/><path d="M8.9 4.6c-.3-1-2.2-.9-2.2.7v3.6c0 1.8-2.4 1.8-2.4.3 0-1.400 2-1.300 2.400-.600M5.300 7h3.800" fill="none" stroke="#fff" stroke-width="1.1" stroke-linecap="round"/></svg><svg style="left:464.6px;top:698.8000000000001px" width="12.8" height="12.8" viewBox="0 0 12.8 12.8" ><circle cx="6.4" cy="6.4" r="6.4" fill="#151515"/><g fill="none" stroke="#cfcfcf" stroke-width="1"><path d="M6.4 2.4a2.4 2.4 0 0 1 1.200 4.400"/><path d="M9.900 8.300a2.400 2.400 0 0 1-4.400 .600"/><path d="M3 8.600a2.400 2.400 0 0 1 2.400-3.900"/></g></svg><div style="position:absolute;left:469.5px;top:715.3px;width:3px;height:1.1px;background:#6b6f72;border-radius:.6px;"></div><svg style="left:491.0px;top:698.9px" width="12.4" height="12.4" viewBox="0 0 12.4 12.4" ><circle cx="6.2" cy="6.2" r="6" fill="#fdfdfd" stroke="#e2e2e0" stroke-width=".5"/><ellipse cx="6.2" cy="4.300" rx="1.500" ry="1.700" fill="none" stroke="#8d8d8d" stroke-width=".8"/><ellipse cx="6.2" cy="8" rx="1.900" ry="2" fill="none" stroke="#8d8d8d" stroke-width=".8"/></svg><div style="position:absolute;left:495.7px;top:715.3px;width:3px;height:1.1px;background:#6b6f72;border-radius:.6px;"></div><svg style="left:516.6px;top:698.4px" width="14" height="14" viewBox="0 0 14 14" ><circle cx="6.800" cy="6.800" r="6" fill="#fbfbfb" stroke="#4a4e52" stroke-width="1.300"/><path d="M6.800 6.800 4 5.200M6.800 6.800h2.400" stroke="#555" stroke-width=".7"/><path d="M9.400 12.600h4.200l-.6-1.200V9.800a1.500 1.500 0 0 0-3 0v1.600z" fill="#f0c24a"/></svg><svg style="left:543.2px;top:698.4000000000001px" width="13.6" height="13.6" viewBox="0 0 13.6 13.6" ><circle cx="6.800" cy="6.800" r="6.800" fill="url(#gfl)"/><path d="M9.400 3.200c-2.200 0-2.400 2.600-2.900 4.200-.4 1.300-.9 2.800-2.300 2.900M5.600 6.800h2.600" fill="none" stroke="#f2f2f2" stroke-width="1" stroke-linecap="round"/></svg><div style="position:absolute;left:548.5px;top:715.3px;width:3px;height:1.1px;background:#6b6f72;border-radius:.6px;"></div><svg style="left:569.1999999999999px;top:698.1999999999999px" width="14.4" height="14.4" viewBox="0 0 14 14" ><circle cx="7" cy="7" r="7" fill="url(#ge)"/><path d="M8.300 4.900c-1.700 0-2.700 1.300-2.500 2.900.2 1.700 1.700 2.900 3.600 2.900 1.300 0 2.600-.5 3.600-1.400l1.400-2.500-2-.2c-.6.800-1.800.900-2.500.4.500-.9-.300-2.100-1.600-2.100z" fill="#ecf3f5"/><path d="M14 7c0 .9-.2 1.800-.5 2.600l-3.800-.3 2.300-2.500z" fill="#ecf3f5"/></svg><svg style="left:596.0px;top:698.3px" width="14" height="14" viewBox="0 0 14 14" ><circle cx="7" cy="7.200" r="6.700" fill="url(#gf)"/><path d="M6.200 .6c3.800-.6 7.400 2.400 7.500 6.200 0 1.600-.4 2.800-1 3.800.6-2.400-.2-5-2.200-6.400C9 3 7.200 2.600 6.200 .6z" fill="#ffd94a" opacity=".9"/><circle cx="7" cy="7.300" r="2.300" fill="#8a3fd6"/><path d="M4.600 6.600c.6-1.600 2.800-2 4-.8-1.600-.4-2.600.6-2.400 2z" fill="#ff7a2a" opacity=".8"/></svg><svg style="left:622.7px;top:698.7px" width="13.6" height="13.6" viewBox="0 0 14 14" ><circle cx="7" cy="7" r="7" fill="#e33b2e"/><path d="M7 7 .94 3.500A7 7 0 0 0 7 14z" fill="#2da94f"/><path d="M7 7v7a7 7 0 0 0 6.060-10.500z" fill="#fdd33a"/><path d="M.94 3.500A7 7 0 0 1 13.060 3.500H7z" fill="#e33b2e"/><circle cx="7" cy="7" r="3.300" fill="#f4f4f4"/><circle cx="7" cy="7" r="2.500" fill="#3a7ee8"/></svg><div style="position:absolute;left:624.9000000000001px;top:715.3px;width:8.6px;height:1.1px;background:#4a4e52;border-radius:.6px;"></div><svg style="left:649.0px;top:698.6999999999999px" width="13.2" height="13.2" viewBox="0 0 13.2 13.2" ><circle cx="6.600" cy="6.600" r="6.600" fill="#1b57c6"/><path d="M6.600 3a2.500 2.500 0 0 1 2.500 2.500c0 1.800-2.500 4.600-2.500 4.600S4.100 7.300 4.100 5.500A2.500 2.500 0 0 1 6.600 3z" fill="#fff"/><circle cx="6.600" cy="5.500" r=".9" fill="#1b57c6"/></svg><svg style="left:675.0px;top:697.9px" width="13.4" height="13.4" viewBox="0 0 13.4 13.4" ><rect x="2.600" y=".4" width="7.600" height="5.400" rx=".5" fill="#3c62b8"/><rect x="1" y="3.400" width="9" height="6" rx=".5" fill="#9fb6dc" stroke="#4a68a8" stroke-width=".6"/><rect x="5" y="6.400" width="7.600" height="4.800" rx=".5" fill="#c4d2ea" stroke="#5873ac" stroke-width=".6"/><path d="M6.500 12.600h5" stroke="#7c8594" stroke-width=".9"/></svg><svg style="left:701.0px;top:697.6999999999999px" width="15.2" height="15.2" viewBox="0 0 15.2 15.2" ><rect x="0" y="2.200" width="15.200" height="11" rx="1.400" fill="#383838"/><path d="M2.800 5.400 5.600 7.700 2.800 10M7 10.400h4" fill="none" stroke="#f4f4f4" stroke-width="1.200"/></svg><svg style="left:727.6px;top:698.2px" width="14.6" height="14.6" viewBox="0 0 24 24" ><path d="M17.500 1.200 22.600 3.600v16.800l-5.100 2.400L8.200 13.900 3.600 17.400 1.400 16.300V7.700l2.200-1.100 4.600 3.500z" fill="#1f8ad6"/><path d="M17.500 6.800 11.200 12l6.300 5.200z" fill="#eaf2f5"/><path d="M3.600 9.600 6.100 12 3.600 14.400z" fill="#eaf2f5"/></svg><div style="position:absolute;left:733.5999999999999px;top:715.3px;width:3.4px;height:1.1px;background:#6b6f72;border-radius:.6px;"></div><svg style="left:754.0px;top:698.2px" width="14" height="14" viewBox="0 0 14 14" ><path d="M.4 .6h4.200v1.600L3.400 1.800 5.600 4 4.600 5 2.400 2.800l.4 1.200H.4z" fill="#2a6fd2"/><rect x="3.600" y="5.600" width="7.400" height="6" rx=".8" fill="#6e6e6e"/><path d="M5 5.800V4.600a2.300 2.300 0 0 1 4.600 0v1.200" fill="none" stroke="#8a8a8a" stroke-width="1.200"/><path d="M9.400 9.600l1-1 2 2 .2-1.200h1.200v3.800h-3.800v-1.200l1.400-.2z" fill="#2fb24a"/></svg><svg style="left:780.6px;top:698.3px" width="14.4" height="14" viewBox="0 0 14.400 14" ><rect x="0" y="0" width="14.400" height="7" fill="#e02626"/><rect x="0" y="7" width="14.400" height="7" fill="#1d1d1f"/><rect x="0" y="6.600" width="14.400" height=".8" fill="#d8d8d8" opacity=".7"/><text x="7.200" y="5.200" font-family="Liberation Sans, sans-serif" font-size="3.800" font-weight="700" fill="#fff" text-anchor="middle" textLength="11">VOICE</text><text x="7.200" y="11.900" font-family="Liberation Sans, sans-serif" font-size="3.800" font-weight="700" fill="#9a9a9a" text-anchor="middle" textLength="11">METER</text></svg><div style="position:absolute;left:786.3px;top:715.3px;width:3px;height:1.1px;background:#6b6f72;border-radius:.6px;"></div><svg style="left:806.9px;top:699px" width="15.2" height="13" viewBox="0 0 15.200 13" ><path d="M.6 1.200A.8.8 0 0 1 1.400.4h3.800l1.400 1.400h7.400a.8.800 0 0 1 .8.800V4H.6z" fill="#e5a52e"/><rect x=".6" y="2.800" width="14.200" height="9.800" rx=".9" fill="#f8cf4f"/><path d="M4.600 12.600V9.800a.8.800 0 0 1 .8-.8h4.400a.8.800 0 0 1 .8.800v2.800z" fill="#2f7fd8"/></svg><div style="position:absolute;left:812.9px;top:715.3px;width:3px;height:1.1px;background:#6b6f72;border-radius:.6px;"></div><svg style="left:1006px;top:703.4px" width="7.2" height="4.4" viewBox="0 0 7.200 4.400" ><path d="M.5 3.900 3.600.7 6.700 3.900" fill="none" stroke="#2a2a2a" stroke-width="1"/></svg><svg style="left:1023.6px;top:700.8px" width="6.6" height="9.2" viewBox="0 0 6.600 9.200" ><rect x="2" y=".3" width="2.600" height="5.200" rx="1.300" fill="#9a9a9a"/><path d="M.6 4.400a2.700 2.700 0 0 0 5.400 0M3.300 7.100v1.800" fill="none" stroke="#8a8a8a" stroke-width=".8"/></svg><svg style="left:1040.6px;top:700.8px" width="10.4" height="9.4" viewBox="0 0 10.400 9.400" ><path d="M7 1.400H.6v5.800h7.200V3.800" fill="none" stroke="#2a2a2a" stroke-width=".9"/><path d="M2.400 8.900h3.600M4.200 7.200v1.700" stroke="#2a2a2a" stroke-width=".9"/><circle cx="8.600" cy="1.700" r="1.300" fill="none" stroke="#2a2a2a" stroke-width=".8"/></svg><svg style="left:1055px;top:701.4px" width="10" height="8.4" viewBox="0 0 10 8.400" ><path d="M.5 3h1.700L4.400 1v6.400L2.200 5.400H.5z" fill="none" stroke="#2a2a2a" stroke-width=".8" stroke-linejoin="round"/><path d="M5.800 2.800a2 2 0 0 1 0 2.800M7.200 1.600a3.700 3.700 0 0 1 0 5.200M8.600.6a5.200 5.200 0 0 1 0 7.200" fill="none" stroke="#2a2a2a" stroke-width=".7"/></svg><svg style="left:1069.6px;top:701.8px" width="10" height="6.8" viewBox="0 0 10 6.800" ><circle cx="1.400" cy="1.400" r="1.200" fill="#111"/><path d="M1.200 2h2.200l.6-1h4.200l1 1.200v3.200L8.400 6.400H3.200L2.400 5z" fill="#111"/><rect x="4.400" y="2.400" width="3.400" height="2" fill="#555"/></svg><span style="position:absolute;top:696.00px;line-height:12px;white-space:pre;color:#3a3a3a;font-size:7.4px;font-family:'Liberation Sans', sans-serif;right:154.20px;letter-spacing:-0.580px;">21:05</span><span style="position:absolute;top:705.40px;line-height:12px;white-space:pre;color:#3a3a3a;font-size:7.4px;font-family:'Liberation Sans', sans-serif;right:154.20px;">02/05/2022</span><div style="position:absolute;left:1130.600px;top:700.900px;width:9.200px;height:9.200px;border-radius:5px;background:#2a8f85"></div><span style="position:absolute;top:700.30px;line-height:12px;white-space:pre;color:#ffffff;font-size:6.2px;font-family:'Liberation Sans', sans-serif;font-weight:700;left:1133.40px;letter-spacing:0.147px;">4</span><svg style="left:824.2px;top:247.6px;z-index:6" width="4.4" height="10.2" viewBox="0 0 4.400 10.2"><path d="M.3 .4h3.800M.3 9.799999999999999h3.800M2.200 .4v9.399999999999999" stroke="#6a6a6a" stroke-width=".7" fill="none"/></svg><svg style="left:829.9px;top:246px;z-index:6" width="4.4" height="9.8" viewBox="0 0 4.400 9.8"><path d="M.3 .4h3.800M.3 9.4h3.800M2.200 .4v9.0" stroke="#555" stroke-width=".7" fill="none"/></svg>
</div></body></html>
